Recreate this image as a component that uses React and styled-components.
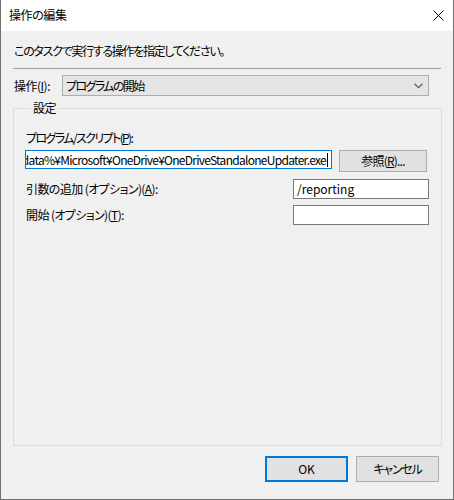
import React from 'react';
import styled, { createGlobalStyle } from 'styled-components';

const GlobalStyle = createGlobalStyle`
  html, body {
    margin: 0;
    padding: 0;
    background: #ffffff;
  }
  body {
    font-family: "Noto Sans CJK JP", "Noto Sans", sans-serif;
    font-size: 12px;
    color: #000000;
    font-feature-settings: "palt";
  }
  * {
    box-sizing: border-box;
  }
`;

const Window = styled.div`
  width: 454px;
  height: 500px;
  display: flex;
  flex-direction: column;
  border: 1px solid #707070;
  border-top: none;
  background: #f0f0f0;
`;

const TitleBar = styled.div`
  height: 31px;
  flex: none;
  display: flex;
  align-items: center;
  justify-content: space-between;
  padding: 0 9px 1px 8px;
  background: #ffffff;
  font-size: 12px;
  line-height: 16px;
  letter-spacing: -0.4px;
`;

const CloseButton = styled.div`
  width: 12px;
  height: 12px;
  display: flex;
  align-items: center;
  justify-content: center;
`;

const Body = styled.div`
  flex: 1;
  display: flex;
  flex-direction: column;
  padding: 0 11px 0 12px;
`;

// Japanese labels: Meiryo UI kana are narrower than Noto's, so tighten them
const Description = styled.div`
  margin-top: 12px;
  padding-left: 1px;
  line-height: 16px;
  letter-spacing: -1.3px;
`;

const Separator = styled.div`
  height: 1px;
  margin-top: 9px;
  margin-right: 1px;
  background: #a0a0a0;
`;

const ComboRow = styled.div`
  display: flex;
  align-items: center;
  margin-top: 6px;
  padding-left: 1px;
  padding-right: 13px;
`;

const ComboLabel = styled.span`
  width: 48px;
  flex: none;
  line-height: 16px;
  letter-spacing: -0.5px;
`;

const Combo = styled.div`
  flex: 1;
  height: 21px;
  display: flex;
  align-items: center;
  justify-content: space-between;
  padding: 0 5px 0 3px;
  background: #e5e5e5;
  border: 1px solid #adadad;
  letter-spacing: -1.6px;
`;

const GroupBox = styled.fieldset`
  margin: 4px 0 0 0;
  padding: 14px 12px 0 12px;
  height: 346px;
  border: 1px solid #dcdcdc;
  min-width: 0;
`;

const Legend = styled.legend`
  margin-left: 5px;
  padding: 0 2px;
  line-height: 16px;
  letter-spacing: -0.5px;
`;

const FieldLabel = styled.div`
  line-height: 16px;
  letter-spacing: ${p => p.$ls ?? -1}px;
`;

const PathRow = styled.div`
  display: flex;
  align-items: flex-start;
  gap: 7px;
  margin-top: 4px;
  margin-left: -1px;
  padding-right: 1px;
`;

const TextBox = styled.div`
  height: ${p => (p.$short ? 19 : 20)}px;
  width: ${p => (p.$wide ? '307px' : '136px')};
  flex: none;
  display: flex;
  align-items: center;
  justify-content: ${p => (p.$end ? 'flex-end' : 'flex-start')};
  overflow: hidden;
  white-space: nowrap;
  padding: 0 3px;
  background: #ffffff;
  border: 1px solid ${p => (p.$focused ? '#0078d7' : '#7a7a7a')};
  line-height: 16px;
  letter-spacing: ${p => (p.$end ? '-0.72px' : '0')};
`;

const Caret = styled.span`
  width: 1px;
  height: 14px;
  flex: none;
  margin-left: 1px;
  background: #000000;
`;

const Button = styled.div`
  height: ${p => p.$h}px;
  width: ${p => p.$w}px;
  flex: none;
  display: flex;
  align-items: center;
  justify-content: center;
  background: #e1e1e1;
  border: ${p => (p.$default ? '2px solid #0078d7' : '1px solid #adadad')};
  line-height: 16px;
  letter-spacing: ${p => p.$ls ?? 0}px;
`;

const OptionRow = styled.div`
  display: flex;
  align-items: center;
  justify-content: space-between;
  margin-top: ${p => p.$gap}px;
`;

const Footer = styled.div`
  display: flex;
  justify-content: flex-end;
  gap: 8px;
  margin-top: 10px;
  padding-right: 3px;
`;

const Key = styled.u`
  text-underline-offset: 1px;
`;

const Chevron = () => (
  <svg width="9" height="6" viewBox="0 0 9 6">
    <polyline points="0.5,0.8 4.5,4.6 8.5,0.8" fill="none" stroke="#5a5a5a" strokeWidth="1.2" />
  </svg>
);

const CloseIcon = () => (
  <svg width="11" height="11" viewBox="0 0 11 11">
    <path d="M0.5 0.5 L10.5 10.5 M10.5 0.5 L0.5 10.5" stroke="#000000" strokeWidth="1" />
  </svg>
);

const App = () => (
  <>
    <GlobalStyle />
    <Window>
      <TitleBar>
        <span>操作の編集</span>
        <CloseButton><CloseIcon /></CloseButton>
      </TitleBar>
      <Body>
        <Description>このタスクで実行する操作を指定してください。</Description>
        <Separator />
        <ComboRow>
          <ComboLabel>操作(<Key>I</Key>):</ComboLabel>
          <Combo>
            <span>プログラムの開始</span>
            <Chevron />
          </Combo>
        </ComboRow>
        <GroupBox>
          <Legend>設定</Legend>
          <FieldLabel $ls={-1.6}>プログラム/スクリプト(<Key>P</Key>):</FieldLabel>
          <PathRow>
            <TextBox $wide $focused $end $short>
              <span>%localappdata%¥Microsoft¥OneDrive¥OneDriveStandaloneUpdater.exe</span>
              <Caret />
            </TextBox>
            <Button $w={88} $h={22} $ls={-0.8}>参照(<Key>R</Key>)...</Button>
          </PathRow>
          <OptionRow $gap={7}>
            <FieldLabel $ls={-0.6}>引数の追加 (オプション)(<Key>A</Key>):</FieldLabel>
            <TextBox>/reporting</TextBox>
          </OptionRow>
          <OptionRow $gap={6}>
            <FieldLabel $ls={-0.6}>開始 (オプション)(<Key>T</Key>):</FieldLabel>
            <TextBox />
          </OptionRow>
        </GroupBox>
        <Footer>
          <Button $default $w={83} $h={26}>OK</Button>
          <Button $w={83} $h={26} $ls={-1.2}>キャンセル</Button>
        </Footer>
      </Body>
    </Window>
  </>
);

export default App;
